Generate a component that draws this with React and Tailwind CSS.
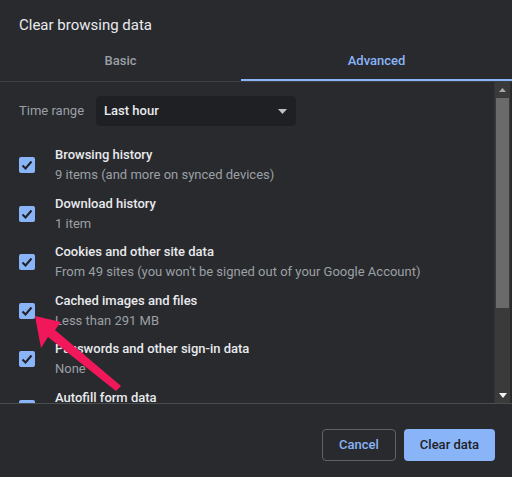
import React from 'react';

const items = [
  { title: 'Browsing history', sub: '9 items (and more on synced devices)' },
  { title: 'Download history', sub: '1 item' },
  { title: 'Cookies and other site data', sub: "From 49 sites (you won't be signed out of your Google Account)" },
  { title: 'Cached images and files', sub: 'Less than 291 MB' },
  { title: 'Passwords and other sign-in data', sub: 'None' },
  { title: 'Autofill form data', sub: '' },
];

const Check = () => (
  <div className="w-[16px] h-[16px] rounded-[2px] bg-[#8ab4f8] shrink-0 flex items-center justify-center">
    <svg width="16" height="16" viewBox="0 0 16 16">
      <path d="M3.5 8.5 L6.5 11.5 L12.5 4.5" fill="none" stroke="#202124" strokeWidth="2" />
    </svg>
  </div>
);

const App = () => {
  return (
    <div className="relative w-[512px] h-[477px] bg-[#292a2d] flex flex-col overflow-hidden font-['Roboto',sans-serif]">
      {/* Title */}
      <div className="h-[41px] pt-[15px] pl-[19px] text-[15px] leading-[20px] text-[#e8eaed]">
        Clear browsing data
      </div>

      {/* Tabs */}
      <div className="flex h-[41px] border-b border-[#3c4043] text-[13px] font-medium">
        <div className="w-[241px] flex items-center justify-center text-[#9aa0a6]">Basic</div>
        <div className="flex-1 flex items-center justify-center text-[#8ab4f8] border-b-2 border-[#8ab4f8] pt-[2px]">
          Advanced
        </div>
      </div>

      {/* Body */}
      <div className="flex h-[322px] border-b border-[#4a4c50]">
        <div className="flex-1 overflow-hidden pl-[19px] pt-[14px]">
          <div className="flex items-center h-[30px] gap-[12px] text-[13px]">
            <span className="text-[#9aa0a6]">Time range</span>
            <div className="w-[200px] h-[30px] bg-[#1f2023] rounded-[4px] flex items-center justify-between pl-[8px] pr-[9px]">
              <span className="text-[#e8eaed] font-medium">Last hour</span>
              <svg width="9" height="5" viewBox="0 0 9 5">
                <path d="M0 0 L9 0 L4.5 5 Z" fill="#bdc1c6" />
              </svg>
            </div>
          </div>

          <div className="mt-[15px]">
            {items.map((item) => (
              <div key={item.title} className="flex items-center h-[48.5px] gap-[20px]">
                <Check />
                <div className="flex flex-col text-[13px] leading-[20px]">
                  <span className="text-[#e8eaed] font-medium">{item.title}</span>
                  <span className="text-[#9aa0a6] min-h-[20px]">{item.sub || '\u00a0'}</span>
                </div>
              </div>
            ))}
          </div>
        </div>

        {/* Scrollbar */}
        <div className="w-[16px] mr-[2px] bg-[#3a3a3b] flex flex-col border-l border-[#333436]">
          <div className="h-[16px] flex items-center justify-center">
            <svg width="7" height="4" viewBox="0 0 7 4">
              <path d="M0 4 L7 4 L3.5 0 Z" fill="#a8a8a8" />
            </svg>
          </div>
          <div className="h-[210px] mx-[1px] bg-[#6a6a6b]"></div>
          <div className="flex-1"></div>
          <div className="h-[16px] flex items-center justify-center">
            <svg width="8" height="5" viewBox="0 0 8 5">
              <path d="M0 0 L8 0 L4 5 Z" fill="#f1f1f1" />
            </svg>
          </div>
        </div>
      </div>

      {/* Footer */}
      <div className="flex justify-end gap-[8px] pt-[25px] pr-[17px] text-[13px] font-medium">
        <button className="w-[74px] h-[32px] rounded-[4px] border border-[#5f6368] text-[#8ab4f8]">
          Cancel
        </button>
        <button className="w-[91px] h-[32px] rounded-[4px] bg-[#8ab4f8] text-[#202124]">
          Clear data
        </button>
      </div>

      {/* Pink annotation arrow */}
      <svg className="absolute left-0 top-0 pointer-events-none" width="512" height="477" viewBox="0 0 512 477">
        <polygon
          points="35,316 61,322 55,330 121,386 116,391 48,337 41,348"
          fill="#f0185b"
        />
      </svg>
    </div>
  );
};

export default App;
